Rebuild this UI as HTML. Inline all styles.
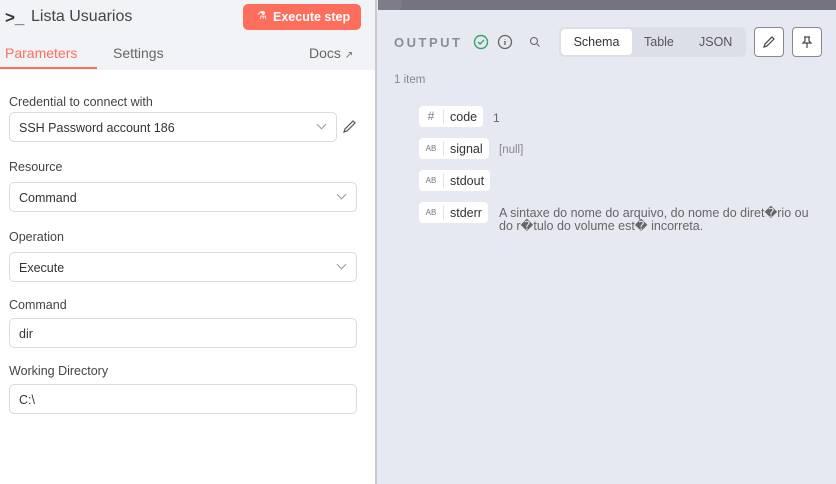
<!DOCTYPE html>
<html><head><style>
*{box-sizing:border-box;margin:0;padding:0}
body{width:836px;height:484px;overflow:hidden;font-family:"Liberation Sans",sans-serif;background:#e7e9f2;position:relative}
.left{position:absolute;left:0;top:0;width:377px;height:484px;background:#fff;border-right:2px solid #c9cad3}
.hdr{position:absolute;left:0;top:0;width:375px;height:70px;background:#f2f3f7}
.t{position:absolute;white-space:nowrap}
.lbl{position:absolute;left:9px;font-size:12.5px;color:#444}
.inp{position:absolute;left:9px;width:348px;height:30px;border:1px solid #d9dbe2;border-radius:5px;font-size:12.5px;color:#333;padding:8px 9px;background:#fff}
.chev{position:absolute;right:11px;top:8px;width:7px;height:7px;border-right:1px solid #999;border-bottom:1px solid #999;transform:rotate(45deg)}
.pill{position:absolute;left:419px;height:21px;background:#fff;border-radius:4px;font-size:12.5px;color:#333;display:flex;align-items:center}
.pill .ic{width:25px;text-align:center;border-right:1px solid #e3e3e8;font-size:8px;color:#777;height:15px;line-height:15px}
.pill .nm{padding:0 6px}
.val{position:absolute;font-size:12px;color:#666}
</style></head><body>
<div style="position:absolute;left:378px;top:0;width:458px;height:10px;background:#75737f"></div>
<div style="position:absolute;left:378px;top:0;width:24px;height:10px;background:#7e7c89;border-radius:0 0 4px 0"></div>
<div class="left">
<div class="hdr">
<div class="t" style="left:5px;top:8px;font-size:17px;font-weight:bold;color:#333">&gt;_</div>
<div class="t" style="left:31px;top:8px;font-size:16px;color:#444">Lista Usuarios</div>
<div style="position:absolute;left:243px;top:4px;width:118px;height:26px;background:#fd6e5c;border-radius:5px;color:#fff;font-size:12.5px;font-weight:bold;line-height:26px;padding-left:30px">Execute step</div>
<div class="t" style="left:257px;top:9px;color:#fff;font-size:11px">⚗</div>
<div class="t" style="left:5px;top:45px;font-size:14px;color:#fd6e5c">Parameters</div>
<div style="position:absolute;left:0;top:67px;width:97px;height:2px;background:#fd6e5c"></div>
<div class="t" style="left:113px;top:45px;font-size:14px;color:#666">Settings</div>
<div class="t" style="left:309px;top:45px;font-size:14px;color:#666">Docs <span style="font-size:10px">↗</span></div>
</div>
<div class="lbl" style="top:95px">Credential to connect with</div>
<div class="inp" style="top:112px;width:328px">SSH Password account 186<div class="chev"></div></div>
<svg style="position:absolute;left:342px;top:119px" width="15" height="15" viewBox="0 0 15 15"><path d="M2 13 L3 10 L11 2 L13 4 L5 12 Z" fill="none" stroke="#555" stroke-width="1.2"/></svg>
<div class="lbl" style="top:160px">Resource</div>
<div class="inp" style="top:182px">Command<div class="chev"></div></div>
<div class="lbl" style="top:230px">Operation</div>
<div class="inp" style="top:252px">Execute<div class="chev"></div></div>
<div class="lbl" style="top:298px">Command</div>
<div class="inp" style="top:318px">dir</div>
<div class="lbl" style="top:364px">Working Directory</div>
<div class="inp" style="top:384px">C:\</div>
</div>
<div class="t" style="left:394px;top:35px;font-size:13px;font-weight:bold;letter-spacing:2.5px;color:#8a8c96">OUTPUT</div>
<svg style="position:absolute;left:473px;top:34px" width="16" height="16"><circle cx="8" cy="8" r="6.5" fill="none" stroke="#2fa564" stroke-width="1.4"/><path d="M5 8 L7 10 L11 6" fill="none" stroke="#2fa564" stroke-width="1.4"/></svg>
<svg style="position:absolute;left:497px;top:34px" width="16" height="16"><circle cx="8" cy="8" r="6.5" fill="none" stroke="#666" stroke-width="1.3"/><path d="M8 7 V11 M8 5 V5.5" stroke="#666" stroke-width="1.4"/></svg>
<svg style="position:absolute;left:529px;top:36px" width="12" height="12"><circle cx="5" cy="5" r="3.5" fill="none" stroke="#666" stroke-width="1.1"/><path d="M8 8 L10.5 10.5" stroke="#666" stroke-width="1.1"/></svg>
<div style="position:absolute;left:559px;top:27px;width:187px;height:30px;background:#dcdfe8;border-radius:5px"></div>
<div style="position:absolute;left:561px;top:29px;width:71px;height:26px;background:#fff;border-radius:4px;font-size:12.5px;color:#333;text-align:center;line-height:26px">Schema</div>
<div class="t" style="left:644px;top:35px;font-size:12.5px;color:#555">Table</div>
<div class="t" style="left:699px;top:35px;font-size:12.5px;color:#555">JSON</div>
<div style="position:absolute;left:754px;top:27px;width:30px;height:30px;border:1px solid #888;border-radius:4px;background:#fff"></div>
<svg style="position:absolute;left:762px;top:35px" width="14" height="14"><path d="M2 12 L3 9 L10 2 L12 4 L5 11 Z" fill="none" stroke="#444" stroke-width="1.2"/></svg>
<div style="position:absolute;left:792px;top:27px;width:30px;height:30px;border:1px solid #888;border-radius:4px;background:#fff"></div>
<svg style="position:absolute;left:800px;top:35px" width="14" height="14"><path d="M4 2 H10 M5 2 V6 L3 8 H11 L9 6 V2 M7 8 V13" fill="none" stroke="#444" stroke-width="1.2"/></svg>
<div class="t" style="left:394px;top:74px;font-size:11.5px;color:#888">1 item</div>
<div class="pill" style="top:106px"><span class="ic" style="font-size:12px">#</span><span class="nm">code</span></div>
<div class="val" style="left:493px;top:111px">1</div>
<div class="pill" style="top:138px"><span class="ic">AB</span><span class="nm">signal</span></div>
<div class="val" style="left:499px;top:144px;font-size:11.5px;color:#888">[null]</div>
<div class="pill" style="top:170px"><span class="ic">AB</span><span class="nm">stdout</span></div>
<div class="pill" style="top:202px"><span class="ic">AB</span><span class="nm">stderr</span></div>
<div class="val" style="left:499px;top:207px;line-height:13px;font-size:12.5px">A sintaxe do nome do arquivo, do nome do diret�rio ou<br>do r�tulo do volume est� incorreta.</div>
</body></html>
